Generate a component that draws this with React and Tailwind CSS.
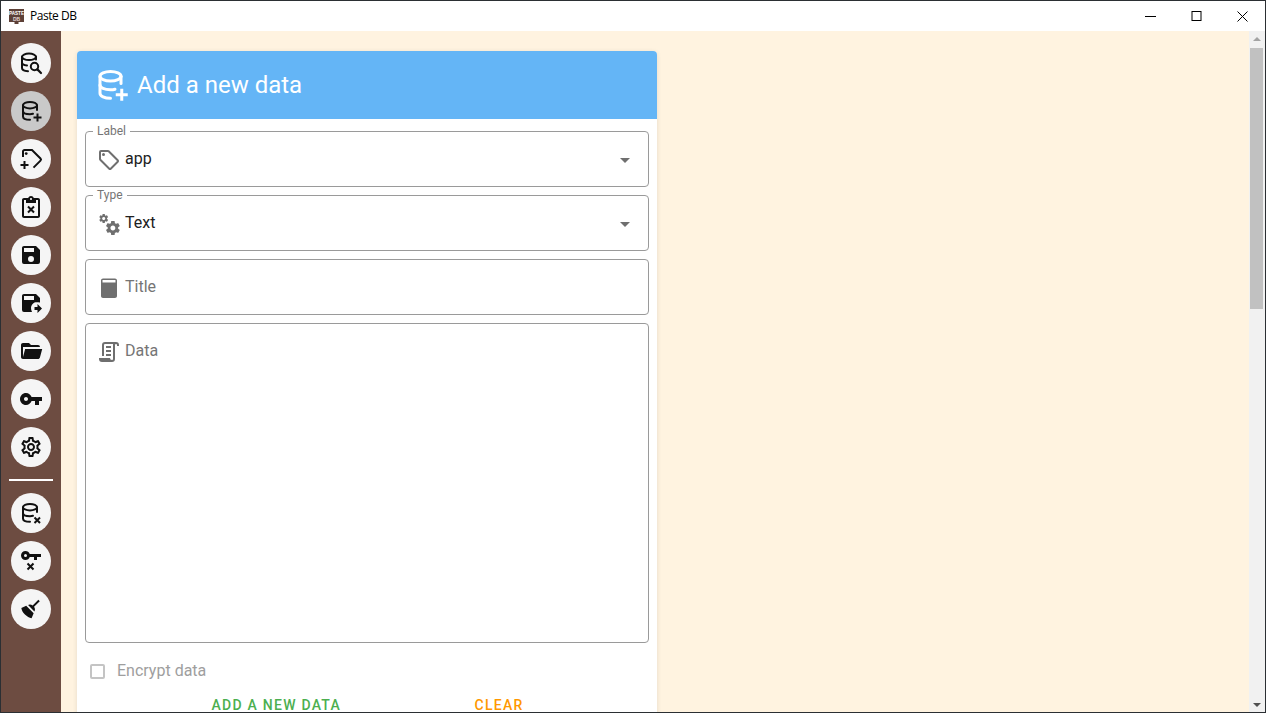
import React from "react";
import { MdOutlineSettings } from "react-icons/md";

const Svg = ({ className = "w-6 h-6", children, fill = "currentColor" }) => (
  <svg viewBox="0 0 24 24" className={className} fill={fill}>{children}</svg>
);

const DbBase = ({ sw = 2 }) => (
  <g fill="none" stroke="currentColor" strokeWidth={sw} strokeLinecap="round">
    <ellipse cx="11" cy="6.2" rx="7" ry="3.2" />
    <path d="M4 6.2V17.5C4 19.4 7 20.8 11 20.8" />
    <path d="M18 6.2V11" />
    <path d="M4 12C4 13.9 7 15.2 11 15.2C12 15.2 13 15.1 14 14.8" />
  </g>
);
const DbSearch = () => (
  <Svg>
    <g fill="none" stroke="currentColor" strokeWidth="2" strokeLinecap="round">
      <ellipse cx="10" cy="5.8" rx="7" ry="3.2" />
      <path d="M3 5.8V17C3 18.8 5.5 20 9 20.2" />
      <path d="M17 5.8V8.5" />
      <path d="M3 11.5C3 13 5 14.2 8 14.5" />
      <circle cx="15.5" cy="15.5" r="3.7" />
      <path d="M18.4 18.4L22 22" strokeWidth="2.2" />
    </g>
  </Svg>
);
const Plus = ({ x = 18.5, y = 18.5 }) => (
  <path d={`M${x - 1} ${y - 4}h2v3h3v2h-3v3h-2v-3h-3v-2h3z`} />
);
const DbPlus = ({ className }) => (
  <Svg className={className}><DbBase /><Plus /></Svg>
);
const DbRemove = () => (
  <Svg>
    <DbBase />
    <path d="M15.5 16.5l5.5 5.5M21 16.5l-5.5 5.5" stroke="currentColor" strokeWidth="2" fill="none" />
  </Svg>
);
const TagPlus = () => (
  <Svg>
    <path d="M4 10V4.5C4 3.7 4.7 3 5.5 3H13L21.5 11.5C22.1 12.1 22.1 13 21.5 13.6L14.5 20.6" fill="none" stroke="currentColor" strokeWidth="2" />
    <circle cx="7.2" cy="6.6" r="1.4" />
    <Plus x={5.5} y={18} />
  </Svg>
);
const ClipX = () => (
  <Svg>
    <path fillRule="evenodd" d="M19 3h-4.2C14.4 1.8 13.3 1 12 1s-2.4.8-2.8 2H5c-1.1 0-2 .9-2 2v16c0 1.1.9 2 2 2h14c1.1 0 2-.9 2-2V5c0-1.1-.9-2-2-2zM12 3c.55 0 1 .45 1 1s-.45 1-1 1-1-.45-1-1 .45-1 1-1zM5 21V5h2v3h10V5h2v16z" />
    <path d="M9 11.5l6 6M15 11.5l-6 6" stroke="currentColor" strokeWidth="2" />
  </Svg>
);
const Save = () => (
  <Svg><path d="M15,9H5V5H15M12,19A3,3 0 0,1 9,16A3,3 0 0,1 12,13A3,3 0 0,1 15,16A3,3 0 0,1 12,19M17,3H5C3.89,3 3,3.9 3,5V19A2,2 0 0,0 5,21H19A2,2 0 0,0 21,19V7L17,3Z" /></Svg>
);
const SaveMove = () => (
  <Svg>
    <path d="M15,9H5V5H15M17,3H5C3.89,3 3,3.9 3,5V19A2,2 0 0,0 5,21H13C12.4,19.8 12,18.4 12,17C12,14.6 13.5,12.6 15.5,11.6C16.7,11.2 18,11 21,11.6V7L17,3Z" />
    <path d="M16 15h3v-3l4.5 4.5-4.5 4.5v-3h-3z" transform="translate(-.5 1)" />
  </Svg>
);
const FolderOpen = () => (
  <Svg><path d="M19,20H4C2.89,20 2,19.1 2,18V6C2,4.89 2.89,4 4,4H10L12,6H19A2,2 0 0,1 21,8H21L4,8V18L6.14,10H23.21L20.93,18.5C20.7,19.37 19.92,20 19,20Z" /></Svg>
);
const Key = () => (
  <Svg><path d="M7 14C5.9 14 5 13.1 5 12S5.9 10 7 10 9 10.9 9 12 8.1 14 7 14M12.6 10C11.8 7.7 9.6 6 7 6C3.7 6 1 8.7 1 12S3.7 18 7 18C9.6 18 11.8 16.3 12.6 14H16V18H20V14H23V10H12.6Z" /></Svg>
);
const KeyRemove = () => (
  <Svg>
    <path d="M6.5,2C8.46,2 10.13,3.25 10.74,5H22V8H18V11H15V8H10.74C10.13,9.75 8.46,11 6.5,11C4,11 2,9 2,6.5C2,4 4,2 6.5,2M6.5,5A1.5,1.5 0 0,0 5,6.5A1.5,1.5 0 0,0 6.5,8A1.5,1.5 0 0,0 8,6.5A1.5,1.5 0 0,0 6.5,5Z" />
    <path d="M8.5 14.5l6 6M14.5 14.5l-6 6" stroke="currentColor" strokeWidth="2" />
  </Svg>
);
const Broom = () => (
  <Svg><path d="M19.36,2.72L20.78,4.14L15.06,9.85C16.13,11.39 16.28,13.24 15.38,14.44L9.06,8.12C10.26,7.22 12.11,7.37 13.65,8.44L19.36,2.72M5.93,17.57C3.92,15.56 2.69,13.16 2.33,10.92L7.2,8.83L14.67,16.3L12.58,21.17C10.34,20.81 7.94,19.58 5.93,17.57Z" /></Svg>
);
const TagOutline = () => (
  <Svg><path d="M21.41 11.58L12.41 2.58A2 2 0 0 0 11 2H4A2 2 0 0 0 2 4V11A2 2 0 0 0 2.59 12.42L11.59 21.42A2 2 0 0 0 13 22A2 2 0 0 0 14.41 21.41L21.41 14.41A2 2 0 0 0 22 13A2 2 0 0 0 21.41 11.58M13 20L4 11V4H11L20 13M6.5 5A1.5 1.5 0 1 1 5 6.5A1.5 1.5 0 0 1 6.5 5Z" /></Svg>
);
const Cogs = () => (
  <Svg><path d="M15.9,18.45C17.25,18.45 18.35,17.35 18.35,16C18.35,14.65 17.25,13.55 15.9,13.55C14.54,13.55 13.45,14.65 13.45,16C13.45,17.35 14.54,18.45 15.9,18.45M21.1,16.68L22.58,17.84C22.71,17.95 22.75,18.13 22.66,18.29L21.26,20.71C21.17,20.86 21,20.92 20.83,20.86L19.09,20.16C18.73,20.44 18.34,20.67 17.91,20.85L17.64,22.7C17.61,22.87 17.47,23 17.3,23H14.5C14.32,23 14.18,22.87 14.15,22.7L13.89,20.85C13.46,20.67 13.07,20.44 12.71,20.16L10.96,20.86C10.81,20.92 10.62,20.86 10.54,20.71L9.14,18.29C9.05,18.13 9.09,17.95 9.22,17.84L10.7,16.68L10.65,16L10.7,15.31L9.22,14.16C9.09,14.05 9.05,13.86 9.14,13.71L10.54,11.29C10.62,11.13 10.81,11.07 10.96,11.13L12.71,11.84C13.07,11.56 13.46,11.32 13.89,11.15L14.15,9.29C14.18,9.13 14.32,9 14.5,9H17.3C17.47,9 17.61,9.13 17.64,9.29L17.91,11.15C18.34,11.32 18.73,11.56 19.09,11.84L20.83,11.13C21,11.07 21.17,11.13 21.26,11.29L22.66,13.71C22.75,13.86 22.71,14.05 22.58,14.16L21.1,15.31L21.15,16L21.1,16.68M6.69,8.07C7.56,8.07 8.26,7.37 8.26,6.5C8.26,5.63 7.56,4.92 6.69,4.92A1.58,1.58 0 0,0 5.11,6.5C5.11,7.37 5.82,8.07 6.69,8.07M10.03,6.94L11,7.68C11.07,7.75 11.09,7.87 11.03,7.97L10.13,9.53C10.08,9.63 9.96,9.67 9.86,9.63L8.74,9.18L8,9.62L7.81,10.81C7.79,10.92 7.7,11 7.59,11H5.79C5.67,11 5.58,10.92 5.56,10.81L5.4,9.62L4.63,9.18L3.5,9.63C3.41,9.67 3.3,9.63 3.24,9.53L2.34,7.97C2.28,7.87 2.31,7.75 2.39,7.68L3.34,6.94L3.31,6.5L3.34,6.06L2.39,5.32C2.31,5.25 2.28,5.13 2.34,5.03L3.24,3.47C3.3,3.37 3.41,3.33 3.5,3.37L4.63,3.82L5.4,3.38L5.56,2.19C5.58,2.08 5.67,2 5.79,2H7.59C7.7,2 7.79,2.08 7.81,2.19L8,3.38L8.74,3.82L9.86,3.37C9.96,3.33 10.08,3.37 10.13,3.47L11.03,5.03C11.09,5.13 11.07,5.25 11,5.32L10.03,6.06L10.06,6.5L10.03,6.94Z" /></Svg>
);
const TitleIcon = () => (
  <Svg>
    <path fillRule="evenodd" d="M6 2.5H18C19.1 2.5 20 3.4 20 4.5V20C20 21.1 19.1 22 18 22H6C4.9 22 4 21.1 4 20V4.5C4 3.4 4.9 2.5 6 2.5ZM5.5 4V6.5H18.5V4Z" />
  </Svg>
);
const ScriptIcon = () => (
  <Svg><path d="M15,20A1,1 0 0,0 16,19V4H8A1,1 0 0,0 7,5V16H5V5A3,3 0 0,1 8,2H19A3,3 0 0,1 22,5V6H20V5A1,1 0 0,0 19,4A1,1 0 0,0 18,5V9L18,19A3,3 0 0,1 15,22H5A3,3 0 0,1 2,19V18H13A2,2 0 0,0 15,20M9,6H14V8H9V6M9,10H14V12H9V10M9,14H14V16H9V14Z" /></Svg>
);

const NavBtn = ({ active, children }) => (
  <button className={`w-10 h-10 rounded-full flex items-center justify-center text-[#111111] ${active ? "bg-[#c9c9c9]" : "bg-[#f5f5f5]"}`}>
    {children}
  </button>
);

const Field = ({ label, icon, value, placeholder, select, tall }) => (
  <div className={`relative border border-[#9a9a9a] rounded-[4px] flex items-start pl-[11px] pr-[18px] pt-[17px] ${tall ? "h-[320px]" : "h-[56px]"}`}>
    {label && (
      <span className="absolute left-[7px] top-[-8px] bg-white px-[4px] text-[12px] leading-[14px] text-[#757575]">{label}</span>
    )}
    <span className="w-6 h-6 text-[#6f6f6f] shrink-0 mt-[-1px] mr-[4px]">{icon}</span>
    <span className={`text-[16px] leading-[22px] mt-[-1px] flex-1 ${value ? "text-[#212121]" : "text-[#757575]"}`}>{value || placeholder}</span>
    {select && <span className="mt-[9px] w-0 h-0 border-x-[5px] border-x-transparent border-t-[5px] border-t-[#6f6f6f]" />}
  </div>
);

export default function App() {
  return (
    <div className="w-[1266px] h-[713px] border border-[#2b2f33] flex flex-col overflow-hidden bg-white font-['Roboto',sans-serif]">
      <header className="h-[30px] shrink-0 flex items-center bg-white">
        <svg viewBox="0 0 15 15" className="w-[15px] h-[15px] ml-[8px] mr-[6px]">
          <path d="M0 0H15V13H9.5V15H5.5V13H0Z" fill="#5d4037" />
          <text x="7.5" y="5.5" textAnchor="middle" fontSize="4.6" fontWeight="700" fill="#ffffff" fontFamily="Liberation Sans, sans-serif">PASTE</text>
          <text x="7.5" y="11.5" textAnchor="middle" fontSize="5" fontWeight="700" fill="#e0d6d2" fontFamily="Liberation Sans, sans-serif">DB</text>
        </svg>
        <span className="text-[12px] text-black font-['Open_Sans',sans-serif] tracking-[-0.45px]">Paste DB</span>
        <div className="ml-auto flex h-full">
          {[
            <path key="a" d="M0 5.5H11" stroke="#000" strokeWidth="1" />,
            <rect key="b" x="1" y="0.5" width="9" height="9" fill="none" stroke="#000" strokeWidth="1" />,
            <path key="c" d="M0.5 0.5L10.5 10.5M10.5 0.5L0.5 10.5" stroke="#000" strokeWidth="1" fill="none" />,
          ].map((p, i) => (
            <div key={i} className="w-[46px] flex items-center justify-center">
              <svg viewBox="0 0 11 11" className="w-[11px] h-[11px]">{p}</svg>
            </div>
          ))}
        </div>
      </header>

      <div className="flex flex-1 min-h-0">
        <nav className="w-[60px] shrink-0 bg-[#6d4c41] flex flex-col items-center gap-2 pt-3">
          <NavBtn><DbSearch /></NavBtn>
          <NavBtn active><DbPlus /></NavBtn>
          <NavBtn><TagPlus /></NavBtn>
          <NavBtn><ClipX /></NavBtn>
          <NavBtn><Save /></NavBtn>
          <NavBtn><SaveMove /></NavBtn>
          <NavBtn><FolderOpen /></NavBtn>
          <NavBtn><Key /></NavBtn>
          <NavBtn><MdOutlineSettings className="w-6 h-6" /></NavBtn>
          <div className="w-[44px] h-[2px] bg-white my-1" />
          <NavBtn><DbRemove /></NavBtn>
          <NavBtn><KeyRemove /></NavBtn>
          <NavBtn><Broom /></NavBtn>
        </nav>

        <main className="flex-1 min-w-0 bg-[#fff3e0] pt-5 pl-4 overflow-hidden">
          <section className="w-[580px] bg-white rounded-t-[4px] shadow-[0_1px_5px_0_rgba(0,0,0,0.10)]">
            <div className="h-[68px] bg-[#64b5f6] rounded-t-[4px] flex items-center pl-[17px] text-white">
              <DbPlus className="w-[36px] h-[36px] mr-[7px]" />
              <h1 className="text-[24px] leading-[32px] font-normal">Add a new data</h1>
            </div>
            <div className="flex flex-col gap-2 px-2 pt-3">
              <Field label="Label" icon={<TagOutline />} value="app" select />
              <Field label="Type" icon={<Cogs />} value="Text" select />
              <Field icon={<TitleIcon />} placeholder="Title" />
              <Field icon={<ScriptIcon />} placeholder="Data" tall />
            </div>
            <label className="flex items-center h-[24px] mt-[16px] pl-[13px]">
              <span className="w-[15px] h-[15px] border-2 border-[#c4c4c4] rounded-[2px] mr-[12px]" />
              <span className="text-[16px] text-[#9e9e9e]">Encrypt data</span>
            </label>
            <div className="flex justify-evenly h-[36px] items-center mt-[4px]">
              <button className="text-[14px] font-medium tracking-[1.25px] text-[#4caf50] ml-[1px]">ADD A NEW DATA</button>
              <button className="text-[14px] font-medium tracking-[1.25px] text-[#ff9800]">CLEAR</button>
            </div>
          </section>
        </main>

        <aside className="w-[16px] shrink-0 bg-[#f1f1f1] flex flex-col items-center">
          <span className="mt-[6px] w-0 h-0 border-x-[4px] border-x-transparent border-b-[4px] border-b-[#a3a3a3]" />
          <div className="w-[13px] h-[261px] bg-[#c1c1c1] mt-[7px] self-start ml-[1px]" />
          <span className="mt-auto mb-[5px] w-0 h-0 border-x-[4px] border-x-transparent border-t-[4px] border-t-[#505050]" />
        </aside>
      </div>
    </div>
  );
}
